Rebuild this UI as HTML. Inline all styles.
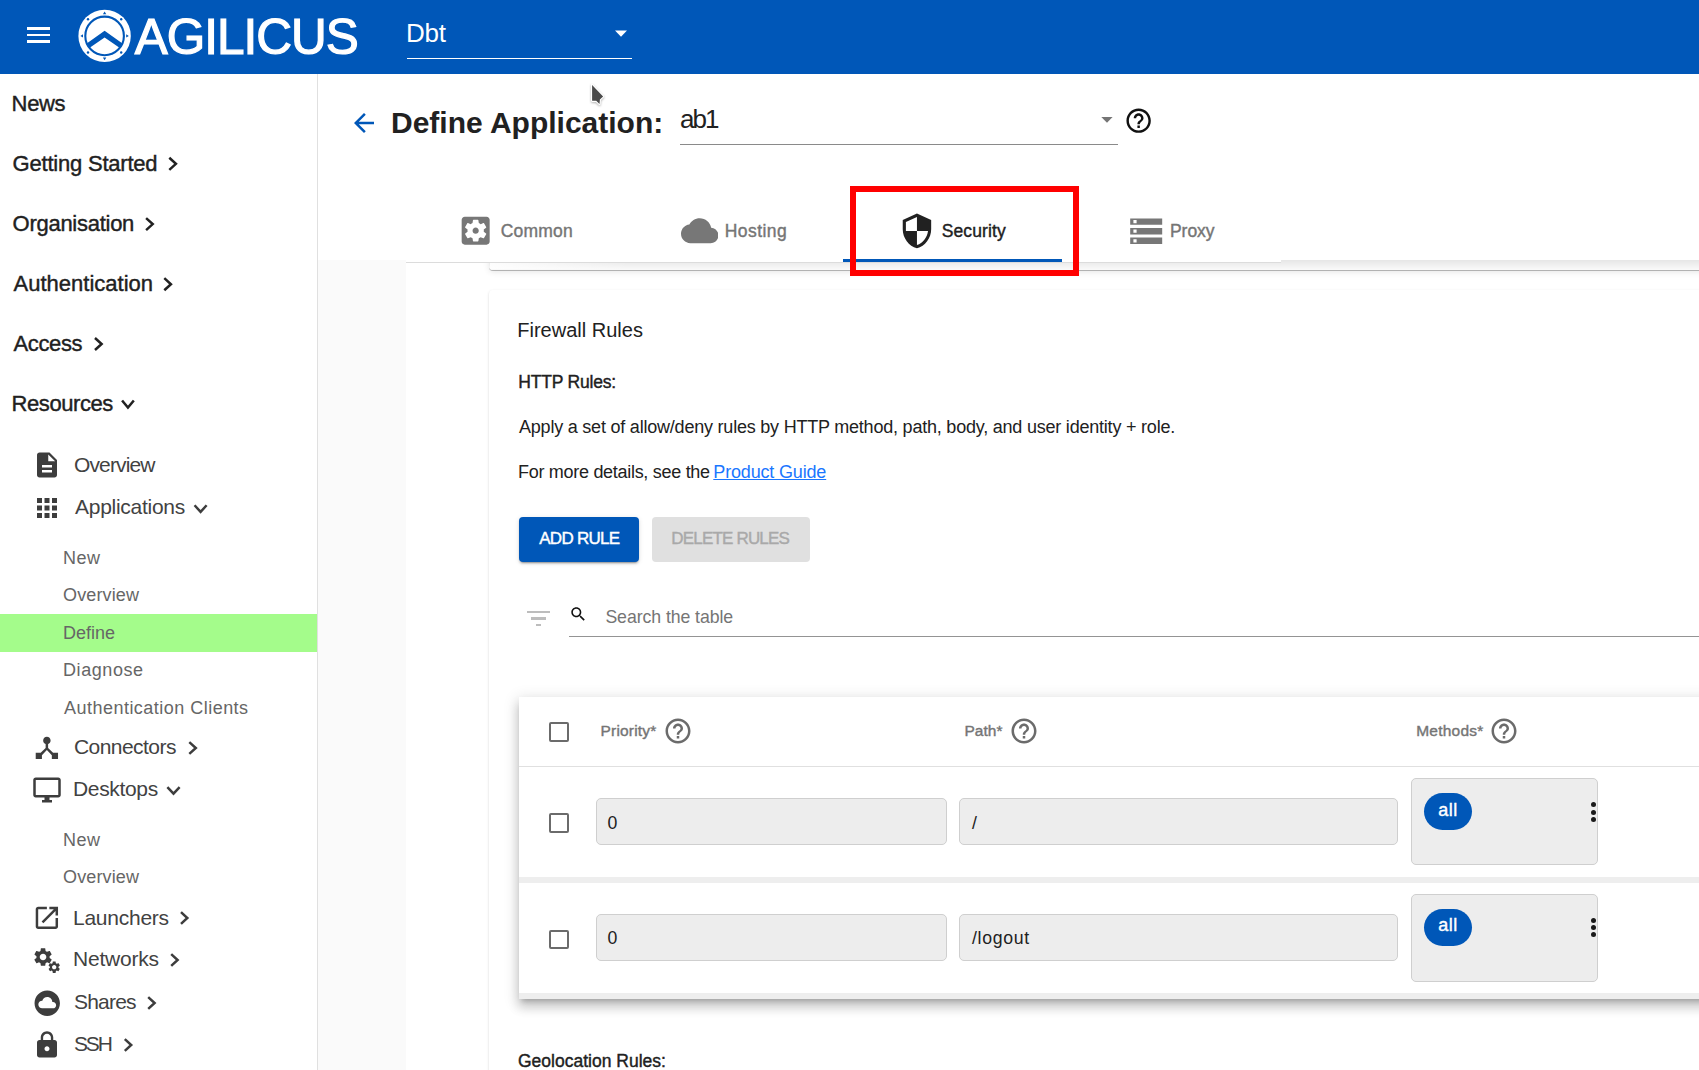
<!DOCTYPE html>
<html><head><meta charset="utf-8"><style>
html,body{margin:0;padding:0;}
body{width:1699px;height:1070px;overflow:hidden;position:relative;background:#fff;font-family:"Liberation Sans",sans-serif;}
.a{position:absolute;}
.t{position:absolute;line-height:0;white-space:nowrap;font-family:"Liberation Sans",sans-serif;}
.tb{position:absolute;left:0;top:0;width:1699px;height:74px;background:#0057b8;}
.hb{position:absolute;left:27px;width:23px;height:2.8px;background:#fff;}
.cb{position:absolute;left:549px;width:15.5px;height:15.5px;border:2px solid #6b6b6b;border-radius:2px;}
.inp{position:absolute;background:#ededed;border:1px solid #cfcfcf;border-radius:5px;box-sizing:border-box;}
.chip{position:absolute;left:1424px;width:48px;height:37px;border-radius:18.5px;background:#0057b8;}
.dot{position:absolute;left:1591px;width:5px;height:5px;border-radius:50%;background:#1a1a1a;}
.band{position:absolute;left:519px;width:1180px;height:6px;background:#eeeeee;}

</style></head><body>
<!-- main backgrounds -->
<div class="a" style="left:318px;top:260px;width:88px;height:810px;background:#fafafa;"></div>
<div class="a" style="left:317px;top:74px;width:1px;height:996px;background:#e0e0e0;"></div>
<!-- previous card bottom -->
<div class="a" style="left:489px;top:180px;width:1300px;height:90px;background:linear-gradient(to bottom,#e6e6e6 0px,#e6e6e6 80px,#fafafa 90px);border-radius:0 0 4px 4px;box-shadow:0 1px 0 0 rgba(0,0,0,.25),0 2px 6px 0 rgba(0,0,0,.10);"></div>
<div class="a" style="left:406px;top:74px;width:875px;height:188px;background:#fff;border-bottom:1px solid #dcdcdc;"></div>
<div class="a" style="left:1281px;top:74px;width:418px;height:186px;background:#fff;"></div>
<div class="a" style="left:490px;top:263px;width:140px;height:6px;background:linear-gradient(to right,rgba(255,255,255,.9),rgba(255,255,255,0));"></div>
<!-- main card -->
<div class="a" style="left:489px;top:290px;width:1300px;height:900px;background:#fff;border-radius:4px;box-shadow:0 2px 1px -1px rgba(0,0,0,.2),0 1px 1px 0 rgba(0,0,0,.14),0 1px 3px 0 rgba(0,0,0,.12);"></div>
<!-- sidebar highlight -->
<div class="a" style="left:0;top:614px;width:317px;height:38px;background:#a4fc8b;"></div>
<!-- toolbar -->
<div class="tb"></div>
<div class="hb" style="top:27.2px"></div>
<div class="hb" style="top:33.6px"></div>
<div class="hb" style="top:40px"></div>
<svg class="a" style="left:74px;top:5px" width="62" height="62" viewBox="74 5 62 62">
 <circle cx="104.6" cy="35.9" r="26.2" fill="#fff"/>
 <circle cx="104.6" cy="35.9" r="19.3" fill="none" stroke="#0057b8" stroke-width="2.1"/>
 <polygon points="104.6,30.8 122.5,43.6 119.5,47.8 104.6,37.4 89.7,47.8 86.7,43.6" fill="#0057b8"/>
 <polygon points="104.6,11.6 102.9,14.2 106.3,14.2" fill="#0057b8"/>
 <polygon points="104.6,60.2 102.9,57.6 106.3,57.6" fill="#0057b8"/>
 <polygon points="80.4,35.9 83,34.2 83,37.6" fill="#0057b8"/>
 <polygon points="128.8,35.9 126.2,34.2 126.2,37.6" fill="#0057b8"/>
 <circle cx="88" cy="19.3" r="1.2" fill="#0057b8"/>
 <circle cx="121.2" cy="19.3" r="1.2" fill="#0057b8"/>
 <circle cx="88" cy="52.5" r="1.2" fill="#0057b8"/>
 <circle cx="121.2" cy="52.5" r="1.2" fill="#0057b8"/>
</svg>
<div class="a" style="left:407px;top:57.8px;width:225px;height:1.2px;background:#fff;"></div>
<svg class="a" style="left:614px;top:30px" width="14" height="8" viewBox="0 0 14 8"><polygon points="1,0.6 13,0.6 7,6.7" fill="#fff"/></svg>
<!-- header -->
<div class="a" style="left:680px;top:143.8px;width:438px;height:1.2px;background:#8a8a8a;"></div>
<svg class="a" style="left:1100px;top:116px" width="14" height="8" viewBox="0 0 14 8"><polygon points="1.3,1 12.6,1 7,6.8" fill="#757575"/></svg>
<!-- tab underline & red box -->
<div class="a" style="left:843px;top:259px;width:219px;height:3px;background:#0057b8;"></div>
<div class="a" style="left:850px;top:186px;width:217px;height:78px;border:6px solid #ff0000;"></div>
<!-- buttons -->
<div class="a" style="left:519px;top:517px;width:120px;height:45px;background:#0057b8;border-radius:4px;box-shadow:0 3px 1px -2px rgba(0,0,0,.2),0 2px 2px 0 rgba(0,0,0,.14),0 1px 5px 0 rgba(0,0,0,.12);"></div>
<div class="a" style="left:652px;top:517px;width:158px;height:45px;background:#e0e0e0;border-radius:4px;"></div>
<!-- search -->
<div class="a" style="left:526.6px;top:610.5px;width:23.4px;height:2.5px;background:#bdbdbd;"></div>
<div class="a" style="left:530.5px;top:617.1px;width:15.5px;height:2.5px;background:#bdbdbd;"></div>
<div class="a" style="left:535.6px;top:623.5px;width:5.4px;height:2.5px;background:#bdbdbd;"></div>
<div class="a" style="left:569px;top:635.5px;width:1130px;height:1px;background:#949494;"></div>
<!-- table card -->
<div class="a" style="left:519px;top:697px;width:1200px;height:302px;background:#fff;box-shadow:0 5px 5px -3px rgba(0,0,0,.2),0 8px 10px 1px rgba(0,0,0,.14),0 3px 14px 2px rgba(0,0,0,.12);"></div>
<div class="a" style="left:519px;top:766px;width:1180px;height:1px;background:#e0e0e0;"></div>
<div class="band" style="top:877px"></div>
<div class="band" style="top:992.5px;height:6.5px"></div>
<div class="cb" style="top:722px"></div>
<div class="cb" style="top:813px"></div>
<div class="cb" style="top:929.5px"></div>
<div class="inp" style="left:595.5px;top:798.3px;width:351px;height:47.1px"></div>
<div class="inp" style="left:959.3px;top:798.3px;width:438.5px;height:47.1px"></div>
<div class="inp" style="left:1410.5px;top:778.4px;width:187.3px;height:87px"></div>
<div class="inp" style="left:595.5px;top:914.2px;width:351px;height:47.1px"></div>
<div class="inp" style="left:959.3px;top:914.2px;width:438.5px;height:47.1px"></div>
<div class="inp" style="left:1410.5px;top:894.4px;width:187.3px;height:87.5px"></div>
<div class="chip" style="top:793px"></div>
<div class="chip" style="top:909px"></div>
<div class="dot" style="top:801.9px"></div>
<div class="dot" style="top:809.5px"></div>
<div class="dot" style="top:816.9px"></div>
<div class="dot" style="top:917.5px"></div>
<div class="dot" style="top:925px"></div>
<div class="dot" style="top:932.4px"></div>
<!-- cursor -->
<svg class="a" style="left:586px;top:80px;filter:drop-shadow(0 1px 1.2px rgba(0,0,0,.3))" width="24" height="30" viewBox="586 80 24 30"><polygon points="592.1,84.9 592.1,100.8 596.2,100.8 599.5,103.9 599.9,99.4 603.1,96.4" fill="#4a4a4a" stroke="#fff" stroke-width="2.2" stroke-linejoin="round" paint-order="stroke"/></svg>

<svg class="a" style="left:0;top:0;overflow:visible" width="1" height="1"><polyline points="169.30,157.78 175.93,163.80 169.30,169.83" fill="none" stroke="#212121" stroke-width="2.5" stroke-linecap="butt" stroke-linejoin="miter"/></svg>
<svg class="a" style="left:0;top:0;overflow:visible" width="1" height="1"><polyline points="146.10,218.07 152.72,224.10 146.10,230.12" fill="none" stroke="#212121" stroke-width="2.5" stroke-linecap="butt" stroke-linejoin="miter"/></svg>
<svg class="a" style="left:0;top:0;overflow:visible" width="1" height="1"><polyline points="164.30,278.18 170.93,284.20 164.30,290.22" fill="none" stroke="#212121" stroke-width="2.5" stroke-linecap="butt" stroke-linejoin="miter"/></svg>
<svg class="a" style="left:0;top:0;overflow:visible" width="1" height="1"><polyline points="95.00,337.98 101.62,344.00 95.00,350.02" fill="none" stroke="#212121" stroke-width="2.5" stroke-linecap="butt" stroke-linejoin="miter"/></svg>
<svg class="a" style="left:0;top:0;overflow:visible" width="1" height="1"><polyline points="122.08,400.50 127.95,407.62 133.82,400.50" fill="none" stroke="#212121" stroke-width="2.5" stroke-linecap="butt" stroke-linejoin="miter"/></svg>
<svg class="a" style="left:0;top:0;overflow:visible" width="1" height="1"><polyline points="194.57,505.25 200.60,511.88 206.62,505.25" fill="none" stroke="#3d3d3d" stroke-width="2.5" stroke-linecap="butt" stroke-linejoin="miter"/></svg>
<svg class="a" style="left:0;top:0;overflow:visible" width="1" height="1"><polyline points="189.30,742.08 195.83,748.00 189.30,753.92" fill="none" stroke="#3d3d3d" stroke-width="2.5" stroke-linecap="butt" stroke-linejoin="miter"/></svg>
<svg class="a" style="left:0;top:0;overflow:visible" width="1" height="1"><polyline points="167.38,787.10 173.50,793.62 179.62,787.10" fill="none" stroke="#3d3d3d" stroke-width="2.5" stroke-linecap="butt" stroke-linejoin="miter"/></svg>
<svg class="a" style="left:0;top:0;overflow:visible" width="1" height="1"><polyline points="181.00,912.08 187.32,918.00 181.00,923.92" fill="none" stroke="#3d3d3d" stroke-width="2.5" stroke-linecap="butt" stroke-linejoin="miter"/></svg>
<svg class="a" style="left:0;top:0;overflow:visible" width="1" height="1"><polyline points="171.20,954.08 177.62,960.00 171.20,965.92" fill="none" stroke="#3d3d3d" stroke-width="2.5" stroke-linecap="butt" stroke-linejoin="miter"/></svg>
<svg class="a" style="left:0;top:0;overflow:visible" width="1" height="1"><polyline points="148.20,997.08 154.62,1003.00 148.20,1008.92" fill="none" stroke="#3d3d3d" stroke-width="2.5" stroke-linecap="butt" stroke-linejoin="miter"/></svg>
<svg class="a" style="left:0;top:0;overflow:visible" width="1" height="1"><polyline points="124.80,1039.08 131.22,1045.00 124.80,1050.92" fill="none" stroke="#3d3d3d" stroke-width="2.5" stroke-linecap="butt" stroke-linejoin="miter"/></svg>
<svg style="position:absolute;left:32.0px;top:449.9px;" width="30.00" height="30.00" viewBox="0 0 24 24"><path fill="#3d3d3d" d="M14 2H6c-1.1 0-1.99.9-1.99 2L4 20c0 1.1.89 2 1.99 2H18c1.1 0 2-.9 2-2V8l-6-6zm2 16H8v-2h8v2zm0-4H8v-2h8v2zm-3-5V3.5L18.5 9H13z"/></svg>
<svg style="position:absolute;left:32.0px;top:493.0px;" width="30.00" height="30.00" viewBox="0 0 24 24"><path fill="#3d3d3d" d="M4 8h4V4H4v4zm6 12h4v-4h-4v4zm-6 0h4v-4H4v4zm0-6h4v-4H4v4zm6 0h4v-4h-4v4zm6-10v4h4V4h-4zm-6 4h4V4h-4v4zm6 6h4v-4h-4v4zm0 6h4v-4h-4v4z"/></svg>
<svg style="position:absolute;left:31.8px;top:733.3px;" width="29.76" height="29.76" viewBox="0 0 24 24"><path fill="#3d3d3d" d="M17 16l-4-4V8.82C14.16 8.4 15 7.3 15 6c0-1.66-1.34-3-3-3S9 4.34 9 6c0 1.3.84 2.4 2 2.82V12l-4 4H3v5h5v-3.05l4-4.2 4 4.2V21h5v-5h-4z"/></svg>
<svg style="position:absolute;left:31.6px;top:775.3px;" width="30.00" height="30.00" viewBox="0 0 24 24"><path fill="#3d3d3d" d="M21 2H3c-1.1 0-2 .9-2 2v12c0 1.1.9 2 2 2h7v2H8v2h8v-2h-2v-2h7c1.1 0 2-.9 2-2V4c0-1.1-.9-2-2-2zm0 14H3V4h18v12z"/></svg>
<svg style="position:absolute;left:31.8px;top:903.3px;" width="29.76" height="29.76" viewBox="0 0 24 24"><path fill="#3d3d3d" d="M19 19H5V5h7V3H5c-1.11 0-2 .9-2 2v14c0 1.1.89 2 2 2h14c1.1 0 2-.9 2-2v-7h-2v7zM14 3v2h3.59l-9.83 9.83 1.41 1.41L19 6.41V10h2V3h-7z"/></svg>
<svg style="position:absolute;left:31.8px;top:945.8px;" width="22.08" height="22.08" viewBox="0 0 24 24"><path fill="#3d3d3d" d="M19.14 12.94c.04-.3.06-.61.06-.94 0-.32-.02-.64-.07-.94l2.03-1.58c.18-.14.23-.41.12-.61l-1.92-3.32c-.12-.22-.37-.29-.59-.22l-2.39.96c-.5-.38-1.03-.7-1.62-.94l-.36-2.54c-.04-.24-.24-.41-.48-.41h-3.84c-.24 0-.43.17-.47.41l-.36 2.54c-.59.24-1.13.57-1.62.94l-2.39-.96c-.22-.08-.47 0-.59.22L2.74 8.87c-.12.21-.08.47.12.61l2.03 1.58c-.05.3-.09.63-.09.94s.02.64.07.94l-2.03 1.58c-.18.14-.23.41-.12.61l1.92 3.32c.12.22.37.29.59.22l2.39-.96c.5.38 1.03.7 1.62.94l.36 2.54c.05.24.24.41.48.41h3.84c.24 0 .44-.17.47-.41l.36-2.54c.59-.24 1.13-.56 1.62-.94l2.39.96c.22.08.47 0 .59-.22l1.92-3.32c.12-.22.07-.47-.12-.61l-2.01-1.58zM12 15.6c-1.98 0-3.6-1.62-3.6-3.6s1.62-3.6 3.6-3.6 3.6 1.62 3.6 3.6-1.62 3.6-3.6 3.6z"/></svg>
<svg style="position:absolute;left:46.8px;top:959.8px;" width="14.40" height="14.40" viewBox="0 0 24 24"><path fill="#3d3d3d" d="M19.14 12.94c.04-.3.06-.61.06-.94 0-.32-.02-.64-.07-.94l2.03-1.58c.18-.14.23-.41.12-.61l-1.92-3.32c-.12-.22-.37-.29-.59-.22l-2.39.96c-.5-.38-1.03-.7-1.62-.94l-.36-2.54c-.04-.24-.24-.41-.48-.41h-3.84c-.24 0-.43.17-.47.41l-.36 2.54c-.59.24-1.13.57-1.62.94l-2.39-.96c-.22-.08-.47 0-.59.22L2.74 8.87c-.12.21-.08.47.12.61l2.03 1.58c-.05.3-.09.63-.09.94s.02.64.07.94l-2.03 1.58c-.18.14-.23.41-.12.61l1.92 3.32c.12.22.37.29.59.22l2.39-.96c.5.38 1.03.7 1.62.94l.36 2.54c.05.24.24.41.48.41h3.84c.24 0 .44-.17.47-.41l.36-2.54c.59-.24 1.13-.56 1.62-.94l2.39.96c.22.08.47 0 .59-.22l1.92-3.32c.12-.22.07-.47-.12-.61l-2.01-1.58zM12 15.6c-1.98 0-3.6-1.62-3.6-3.6s1.62-3.6 3.6-3.6 3.6 1.62 3.6 3.6-1.62 3.6-3.6 3.6z"/></svg>
<svg style="position:absolute;left:31.5px;top:987.9px;" width="30.48" height="30.48" viewBox="0 0 24 24"><path fill="#3d3d3d" d="M12 2C6.48 2 2 6.48 2 12s4.48 10 10 10 10-4.48 10-10S17.52 2 12 2zm4.5 14H8c-1.66 0-3-1.34-3-3s1.34-3 3-3l.14.01C8.58 8.28 10.13 7 12 7c2.21 0 4 1.79 4 4h.5c1.38 0 2.5 1.12 2.5 2.5S17.88 16 16.5 16z"/></svg>
<svg style="position:absolute;left:31.7px;top:1029.8px;" width="30.00" height="30.00" viewBox="0 0 24 24"><path fill="#3d3d3d" d="M18 8h-1V6c0-2.76-2.24-5-5-5S7 3.24 7 6v2H6c-1.1 0-2 .9-2 2v10c0 1.1.9 2 2 2h12c1.1 0 2-.9 2-2V10c0-1.1-.9-2-2-2zm-6 9c-1.1 0-2-.9-2-2s.9-2 2-2 2 .9 2 2-.9 2-2 2zm3.1-9H8.9V6c0-1.71 1.39-3.1 3.1-3.1 1.71 0 3.1 1.39 3.1 3.1v2z"/></svg>
<svg style="position:absolute;left:457.3px;top:211.8px;" width="37.34" height="37.34" viewBox="0 0 24 24"><path fill="#777" d="M12 10c-1.1 0-2 .9-2 2s.9 2 2 2 2-.9 2-2-.9-2-2-2zm7-7H5c-1.11 0-2 .9-2 2v14c0 1.1.89 2 2 2h14c1.11 0 2-.9 2-2V5c0-1.1-.89-2-2-2zm-1.75 9c0 .23-.02.46-.05.68l1.48 1.16c.13.11.17.3.08.45l-1.4 2.42c-.09.15-.27.21-.43.15l-1.74-.7c-.36.28-.76.51-1.180.69l-.26 1.85c-.03.17-.18.3-.35.3h-2.8c-.17 0-.32-.13-.35-.29l-.26-1.85c-.43-.18-.82-.41-1.18-.69l-1.74.7c-.16.06-.34 0-.43-.15l-1.4-2.42c-.09-.15-.05-.34.08-.45l1.48-1.16c-.03-.23-.05-.46-.05-.69 0-.23.02-.46.05-.68l-1.48-1.16c-.13-.11-.17-.3-.08-.45l1.4-2.42c.09-.15.27-.21.43-.15l1.74.7c.36-.28.76-.51 1.18-.69l.26-1.850c.03-.17.18-.3.35-.3h2.8c.17 0 .32.13.35.29l.26 1.85c.43.18.82.41 1.18.69l1.74-.7c.16-.06.34 0 .43.15l1.4 2.42c.09.15.05.34-.08.45l-1.48 1.16c.03.23.05.46.05.69z"/></svg>
<svg style="position:absolute;left:681.0px;top:212.3px;" width="37.44" height="37.44" viewBox="0 0 24 24"><path fill="#777" d="M19.35 10.04C18.67 6.59 15.64 4 12 4 9.11 4 6.6 5.64 5.35 8.04 2.34 8.36 0 10.91 0 14c0 3.31 2.69 6 6 6h13c2.76 0 5-2.24 5-5 0-2.64-2.05-4.78-4.65-4.96z"/></svg>
<svg style="position:absolute;left:898.3px;top:212.2px;" width="37.92" height="37.92" viewBox="0 0 24 24"><path fill="#212121" d="M12 1L3 5v6c0 5.55 3.84 10.74 9 12 5.16-1.26 9-6.450 9-12V5l-9-4zm0 10.99h7c-.53 4.12-3.28 7.79-7 8.94V12H5V6.3l7-3.11v8.8z"/></svg>
<svg style="position:absolute;left:1127.1px;top:211.9px;" width="38.40" height="38.40" viewBox="0 0 24 24"><path fill="#777" d="M2 20h20v-4H2v4zm2-3h2v2H4v-2zM2 4v4h20V4H2zm4 3H4V5h2v2zm-4 7h20v-4H2v4zm2-3h2v2H4v-2z"/></svg>
<svg style="position:absolute;left:1124.3px;top:106.3px;" width="29.28" height="29.28" viewBox="0 0 24 24"><path fill="#111" d="M11 18h2v-2h-2v2zm1-16C6.48 2 2 6.48 2 12s4.48 10 10 10 10-4.48 10-10S17.52 2 12 2zm0 18c-4.41 0-8-3.59-8-8s3.59-8 8-8 8 3.59 8 8-3.59 8-8 8zm0-14c-2.21 0-4 1.79-4 4h2c0-1.1.9-2 2-2s2 .9 2 2c0 2-3 1.75-3 5h2c0-2.250 3-2.5 3-5 0-2.21-1.79-4-4-4z"/></svg>
<svg style="position:absolute;left:662.5px;top:715.8px;" width="30.00" height="30.00" viewBox="0 0 24 24"><path fill="#6b6b6b" d="M11 18h2v-2h-2v2zm1-16C6.48 2 2 6.48 2 12s4.48 10 10 10 10-4.48 10-10S17.52 2 12 2zm0 18c-4.41 0-8-3.59-8-8s3.59-8 8-8 8 3.59 8 8-3.59 8-8 8zm0-14c-2.21 0-4 1.79-4 4h2c0-1.1.9-2 2-2s2 .9 2 2c0 2-3 1.75-3 5h2c0-2.250 3-2.5 3-5 0-2.21-1.79-4-4-4z"/></svg>
<svg style="position:absolute;left:1009.0px;top:715.8px;" width="30.00" height="30.00" viewBox="0 0 24 24"><path fill="#6b6b6b" d="M11 18h2v-2h-2v2zm1-16C6.48 2 2 6.48 2 12s4.48 10 10 10 10-4.48 10-10S17.52 2 12 2zm0 18c-4.41 0-8-3.59-8-8s3.59-8 8-8 8 3.59 8 8-3.59 8-8 8zm0-14c-2.21 0-4 1.79-4 4h2c0-1.1.9-2 2-2s2 .9 2 2c0 2-3 1.75-3 5h2c0-2.250 3-2.5 3-5 0-2.21-1.79-4-4-4z"/></svg>
<svg style="position:absolute;left:1488.7px;top:715.8px;" width="30.00" height="30.00" viewBox="0 0 24 24"><path fill="#6b6b6b" d="M11 18h2v-2h-2v2zm1-16C6.48 2 2 6.48 2 12s4.48 10 10 10 10-4.48 10-10S17.52 2 12 2zm0 18c-4.41 0-8-3.59-8-8s3.59-8 8-8 8 3.59 8 8-3.59 8-8 8zm0-14c-2.21 0-4 1.79-4 4h2c0-1.1.9-2 2-2s2 .9 2 2c0 2-3 1.75-3 5h2c0-2.250 3-2.5 3-5 0-2.21-1.79-4-4-4z"/></svg>
<svg style="position:absolute;left:568.8px;top:605.2px;" width="18.48" height="18.48" viewBox="0 0 24 24"><path fill="#111" d="M15.5 14h-.79l-.28-.27C15.41 12.59 16 11.11 16 9.5 16 5.91 13.09 3 9.5 3S3 5.91 3 9.5 5.91 16 9.5 16c1.61 0 3.09-.59 4.23-1.57l.27.28v.79l5 4.99L20.49 19l-4.99-5zm-6 0C7.01 14 5 11.99 5 9.5S7.01 5 9.5 5 14 7.01 14 9.5 11.99 14 9.5 14z"/></svg>
<svg style="position:absolute;left:349.4px;top:108.0px;" width="30.00" height="30.00" viewBox="0 0 24 24"><path fill="#0057b8" d="M20 11H7.83l5.59-5.59L12 4l-8 8 8 8 1.41-1.41L7.83 13H20v-2z"/></svg>
<div class="t" id="t0" style="left:406.0px;top:32.59px;font-size:26px;font-weight:400;color:#fff;letter-spacing:-0.300px;">Dbt</div>
<div class="t" id="t1" style="left:134.8px;top:37.45px;font-size:49.5px;font-weight:400;color:#fff;letter-spacing:-1.000px;-webkit-text-stroke:1.2px #fff;">AGILICUS</div>
<div class="t" id="t2" style="left:11.6px;top:103.98px;font-size:22px;font-weight:400;color:#212121;letter-spacing:-0.333px;-webkit-text-stroke:0.4px #212121;">News</div>
<div class="t" id="t3" style="left:12.6px;top:163.98px;font-size:22px;font-weight:400;color:#212121;letter-spacing:-0.214px;-webkit-text-stroke:0.4px #212121;">Getting Started</div>
<div class="t" id="t4" style="left:12.6px;top:223.98px;font-size:22px;font-weight:400;color:#212121;letter-spacing:-0.273px;-webkit-text-stroke:0.4px #212121;">Organisation</div>
<div class="t" id="t5" style="left:13.6px;top:283.98px;font-size:22px;font-weight:400;color:#212121;letter-spacing:0.000px;-webkit-text-stroke:0.4px #212121;">Authentication</div>
<div class="t" id="t6" style="left:13.6px;top:343.98px;font-size:22px;font-weight:400;color:#212121;letter-spacing:-0.400px;-webkit-text-stroke:0.4px #212121;">Access</div>
<div class="t" id="t7" style="left:11.6px;top:403.98px;font-size:22px;font-weight:400;color:#212121;letter-spacing:-0.438px;-webkit-text-stroke:0.4px #212121;">Resources</div>
<div class="t" id="t8" style="left:74.0px;top:464.72px;font-size:21px;font-weight:400;color:#424242;letter-spacing:-0.857px;">Overview</div>
<div class="t" id="t9" style="left:75.0px;top:506.92px;font-size:21px;font-weight:400;color:#424242;letter-spacing:-0.273px;">Applications</div>
<div class="t" id="t10" style="left:74.0px;top:747.22px;font-size:21px;font-weight:400;color:#424242;letter-spacing:-0.556px;">Connectors</div>
<div class="t" id="t11" style="left:73.0px;top:789.32px;font-size:21px;font-weight:400;color:#424242;letter-spacing:-0.343px;">Desktops</div>
<div class="t" id="t12" style="left:73.0px;top:917.72px;font-size:21px;font-weight:400;color:#424242;letter-spacing:-0.250px;">Launchers</div>
<div class="t" id="t13" style="left:73.0px;top:959.42px;font-size:21px;font-weight:400;color:#424242;letter-spacing:-0.229px;">Networks</div>
<div class="t" id="t14" style="left:74.0px;top:1002.32px;font-size:21px;font-weight:400;color:#424242;letter-spacing:-0.800px;">Shares</div>
<div class="t" id="t15" style="left:74.0px;top:1044.42px;font-size:21px;font-weight:400;color:#424242;letter-spacing:-2.150px;">SSH</div>
<div class="t" id="t16" style="left:63.0px;top:557.76px;font-size:18px;font-weight:400;color:#666666;letter-spacing:0.500px;">New</div>
<div class="t" id="t17" style="left:63.0px;top:594.76px;font-size:18px;font-weight:400;color:#666666;letter-spacing:0.143px;">Overview</div>
<div class="t" id="t18" style="left:63.0px;top:632.76px;font-size:18px;font-weight:400;color:#666666;letter-spacing:0.000px;">Define</div>
<div class="t" id="t19" style="left:63.0px;top:669.76px;font-size:18px;font-weight:400;color:#666666;letter-spacing:0.571px;">Diagnose</div>
<div class="t" id="t20" style="left:64.0px;top:707.76px;font-size:18px;font-weight:400;color:#666666;letter-spacing:0.476px;">Authentication Clients</div>
<div class="t" id="t21" style="left:63.0px;top:839.76px;font-size:18px;font-weight:400;color:#666666;letter-spacing:0.500px;">New</div>
<div class="t" id="t22" style="left:63.0px;top:877.26px;font-size:18px;font-weight:400;color:#666666;letter-spacing:0.143px;">Overview</div>
<div class="t" id="t23" style="left:391.0px;top:122.61px;font-size:30px;font-weight:700;color:#212121;letter-spacing:0.000px;">Define Application:</div>
<div class="t" id="t24" style="left:680.0px;top:118.99px;font-size:26px;font-weight:400;color:#212121;letter-spacing:-2.000px;">ab1</div>
<div class="t" id="t25" style="left:500.7px;top:230.64px;font-size:17.5px;font-weight:400;color:#757575;letter-spacing:0.200px;-webkit-text-stroke:0.4px #757575;">Common</div>
<div class="t" id="t26" style="left:724.7px;top:230.64px;font-size:17.5px;font-weight:400;color:#757575;letter-spacing:0.450px;-webkit-text-stroke:0.4px #757575;">Hosting</div>
<div class="t" id="t27" style="left:941.7px;top:230.64px;font-size:17.5px;font-weight:400;color:#212121;letter-spacing:0.114px;-webkit-text-stroke:0.4px #212121;">Security</div>
<div class="t" id="t28" style="left:1170.0px;top:230.64px;font-size:17.5px;font-weight:400;color:#757575;letter-spacing:-0.050px;-webkit-text-stroke:0.4px #757575;">Proxy</div>
<div class="t" id="t29" style="left:517.3px;top:330.07px;font-size:20px;font-weight:400;color:#212121;letter-spacing:0.000px;">Firewall Rules</div>
<div class="t" id="t30" style="left:518.3px;top:382.44px;font-size:17.5px;font-weight:400;color:#212121;letter-spacing:-0.200px;-webkit-text-stroke:0.4px #212121;">HTTP Rules:</div>
<div class="t" id="t31" style="left:519.0px;top:426.76px;font-size:18px;font-weight:400;color:#212121;letter-spacing:-0.214px;">Apply a set of allow/deny rules by HTTP method, path, body, and user identity + role.</div>
<div class="t" id="t32" style="left:518.0px;top:472.06px;font-size:18px;font-weight:400;color:#212121;letter-spacing:-0.292px;">For more details, see the</div>
<div class="t" id="t33" style="left:713.3px;top:472.06px;font-size:18px;font-weight:400;color:#1a76ff;letter-spacing:-0.167px;text-decoration:underline;">Product Guide</div>
<div class="t" id="t34" style="left:539.2px;top:538.91px;font-size:17px;font-weight:400;color:#fff;letter-spacing:-0.714px;-webkit-text-stroke:0.4px #fff;">ADD RULE</div>
<div class="t" id="t35" style="left:671.3px;top:538.91px;font-size:17px;font-weight:400;color:#a9a9a9;letter-spacing:-0.818px;-webkit-text-stroke:0.4px #a9a9a9;">DELETE RULES</div>
<div class="t" id="t36" style="left:605.4px;top:616.67px;font-size:17.7px;font-weight:400;color:#757575;letter-spacing:-0.067px;">Search the table</div>
<div class="t" id="t37" style="left:600.5px;top:730.63px;font-size:15.5px;font-weight:400;color:#757575;letter-spacing:0.188px;-webkit-text-stroke:0.4px #757575;">Priority*</div>
<div class="t" id="t38" style="left:964.5px;top:730.63px;font-size:15.5px;font-weight:400;color:#757575;letter-spacing:0.000px;-webkit-text-stroke:0.4px #757575;">Path*</div>
<div class="t" id="t39" style="left:1416.2px;top:730.63px;font-size:15.5px;font-weight:400;color:#757575;letter-spacing:0.229px;-webkit-text-stroke:0.4px #757575;">Methods*</div>
<div class="t" id="t40" style="left:607.4px;top:822.87px;font-size:17.7px;font-weight:400;color:#212121;letter-spacing:0.000px;">0</div>
<div class="t" id="t41" style="left:972.0px;top:822.87px;font-size:17.7px;font-weight:400;color:#212121;letter-spacing:0.000px;">/</div>
<div class="t" id="t42" style="left:607.4px;top:937.97px;font-size:17.7px;font-weight:400;color:#212121;letter-spacing:0.000px;">0</div>
<div class="t" id="t43" style="left:972.0px;top:937.97px;font-size:17.7px;font-weight:400;color:#212121;letter-spacing:0.667px;">/logout</div>
<div class="t" id="t44" style="left:1438.3px;top:810.46px;font-size:18px;font-weight:400;color:#fff;letter-spacing:0.500px;-webkit-text-stroke:0.4px #fff;">all</div>
<div class="t" id="t45" style="left:1438.3px;top:925.46px;font-size:18px;font-weight:400;color:#fff;letter-spacing:0.500px;-webkit-text-stroke:0.4px #fff;">all</div>
<div class="t" id="t46" style="left:518.0px;top:1061.44px;font-size:17.5px;font-weight:400;color:#212121;letter-spacing:0.000px;-webkit-text-stroke:0.4px #212121;">Geolocation Rules:</div>
</body></html>
